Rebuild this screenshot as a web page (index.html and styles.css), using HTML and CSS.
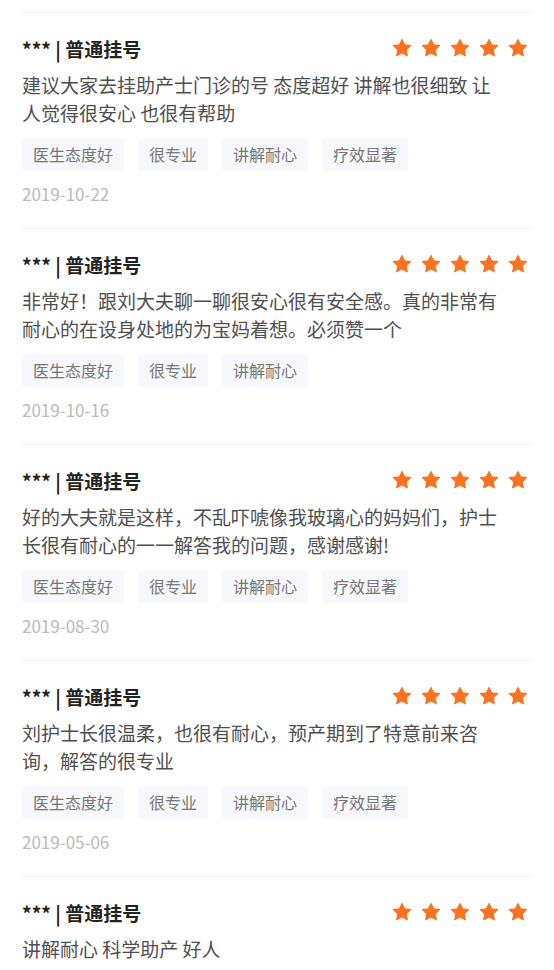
FILE: index.html
```html
<!DOCTYPE html>
<html lang="zh-CN">
<head>
    <meta charset="UTF-8">
    <meta name="viewport" content="width=device-width, initial-scale=1.0">
    <title>患者评价</title>
    <link rel="stylesheet" href="styles.css">
</head>
<body>
    <svg width="0" height="0" class="defs">
        <symbol id="star" viewBox="0 0 24 24">
            <path d="M12 2.6l2.9 5.9 6.5.95-4.7 4.6 1.1 6.5L12 17.5l-5.8 3.05 1.1-6.5-4.7-4.6 6.5-.95z"/>
        </symbol>
    </svg>

    <div class="list">
        <div class="review">
            <div class="review-head">
                <div class="title">*** | 普通挂号</div>
                <div class="stars">
                    <svg><use href="#star"/></svg><svg><use href="#star"/></svg><svg><use href="#star"/></svg><svg><use href="#star"/></svg><svg><use href="#star"/></svg>
                </div>
            </div>
            <p class="text">建议大家去挂助产士门诊的号 态度超好 讲解也很细致 让人觉得很安心 也很有帮助</p>
            <div class="tags">
                <span class="tag">医生态度好</span>
                <span class="tag">很专业</span>
                <span class="tag">讲解耐心</span>
                <span class="tag">疗效显著</span>
            </div>
            <div class="date">2019-10-22</div>
        </div>

        <div class="review">
            <div class="review-head">
                <div class="title">*** | 普通挂号</div>
                <div class="stars">
                    <svg><use href="#star"/></svg><svg><use href="#star"/></svg><svg><use href="#star"/></svg><svg><use href="#star"/></svg><svg><use href="#star"/></svg>
                </div>
            </div>
            <p class="text">非常好！跟刘大夫聊一聊很安心很有安全感。真的非常有耐心的在设身处地的为宝妈着想。必须赞一个</p>
            <div class="tags">
                <span class="tag">医生态度好</span>
                <span class="tag">很专业</span>
                <span class="tag">讲解耐心</span>
            </div>
            <div class="date">2019-10-16</div>
        </div>

        <div class="review">
            <div class="review-head">
                <div class="title">*** | 普通挂号</div>
                <div class="stars">
                    <svg><use href="#star"/></svg><svg><use href="#star"/></svg><svg><use href="#star"/></svg><svg><use href="#star"/></svg><svg><use href="#star"/></svg>
                </div>
            </div>
            <p class="text">好的大夫就是这样，不乱吓唬像我玻璃心的妈妈们，护士长很有耐心的一一解答我的问题，感谢感谢!</p>
            <div class="tags">
                <span class="tag">医生态度好</span>
                <span class="tag">很专业</span>
                <span class="tag">讲解耐心</span>
                <span class="tag">疗效显著</span>
            </div>
            <div class="date">2019-08-30</div>
        </div>

        <div class="review">
            <div class="review-head">
                <div class="title">*** | 普通挂号</div>
                <div class="stars">
                    <svg><use href="#star"/></svg><svg><use href="#star"/></svg><svg><use href="#star"/></svg><svg><use href="#star"/></svg><svg><use href="#star"/></svg>
                </div>
            </div>
            <p class="text">刘护士长很温柔，也很有耐心，预产期到了特意前来咨询，解答的很专业</p>
            <div class="tags">
                <span class="tag">医生态度好</span>
                <span class="tag">很专业</span>
                <span class="tag">讲解耐心</span>
                <span class="tag">疗效显著</span>
            </div>
            <div class="date">2019-05-06</div>
        </div>

        <div class="review">
            <div class="review-head">
                <div class="title">*** | 普通挂号</div>
                <div class="stars">
                    <svg><use href="#star"/></svg><svg><use href="#star"/></svg><svg><use href="#star"/></svg><svg><use href="#star"/></svg><svg><use href="#star"/></svg>
                </div>
            </div>
            <p class="text">讲解耐心 科学助产 好人</p>
        </div>
    </div>
</body>
</html>
```

FILE: styles.css
```css
body {
    margin: 0;
    padding: 0;
    background: #ffffff;
    font-family: "Noto Sans CJK SC", "Noto Sans", sans-serif;
    color: #555555;
}
.defs {
    position: absolute;
}
.list {
    padding-top: 12px;
}
.review {
    margin: 0 22px;
    padding: 22px 0 23px;
    border-top: 1px solid #f2f2f2;
}
.review-head {
    display: flex;
    justify-content: space-between;
    align-items: center;
    height: 28px;
}
.title {
    font-size: 19px;
    line-height: 28px;
    font-weight: bold;
    color: #222222;
}
.stars {
    display: flex;
    gap: 7px;
    margin-right: 3px;
    margin-top: -3px;
}
.stars svg {
    width: 22px;
    height: 22px;
    fill: #fb7321;
    stroke: #fb7321;
    stroke-width: 1.2;
    stroke-linejoin: round;
}
.text {
    margin: 8px 30px 0 0;
    font-size: 19px;
    line-height: 28px;
    color: #4f4f4f;
}
.tags {
    display: flex;
    flex-wrap: wrap;
    gap: 14px;
    margin-top: 11px;
}
.tag {
    padding: 5px 11px;
    font-size: 16px;
    line-height: 23px;
    color: #777777;
    background: #f6f8fb;
    border-radius: 4px;
}
.date {
    margin-top: 12px;
    font-size: 17px;
    line-height: 22px;
    color: #bbbbbb;
}
```
